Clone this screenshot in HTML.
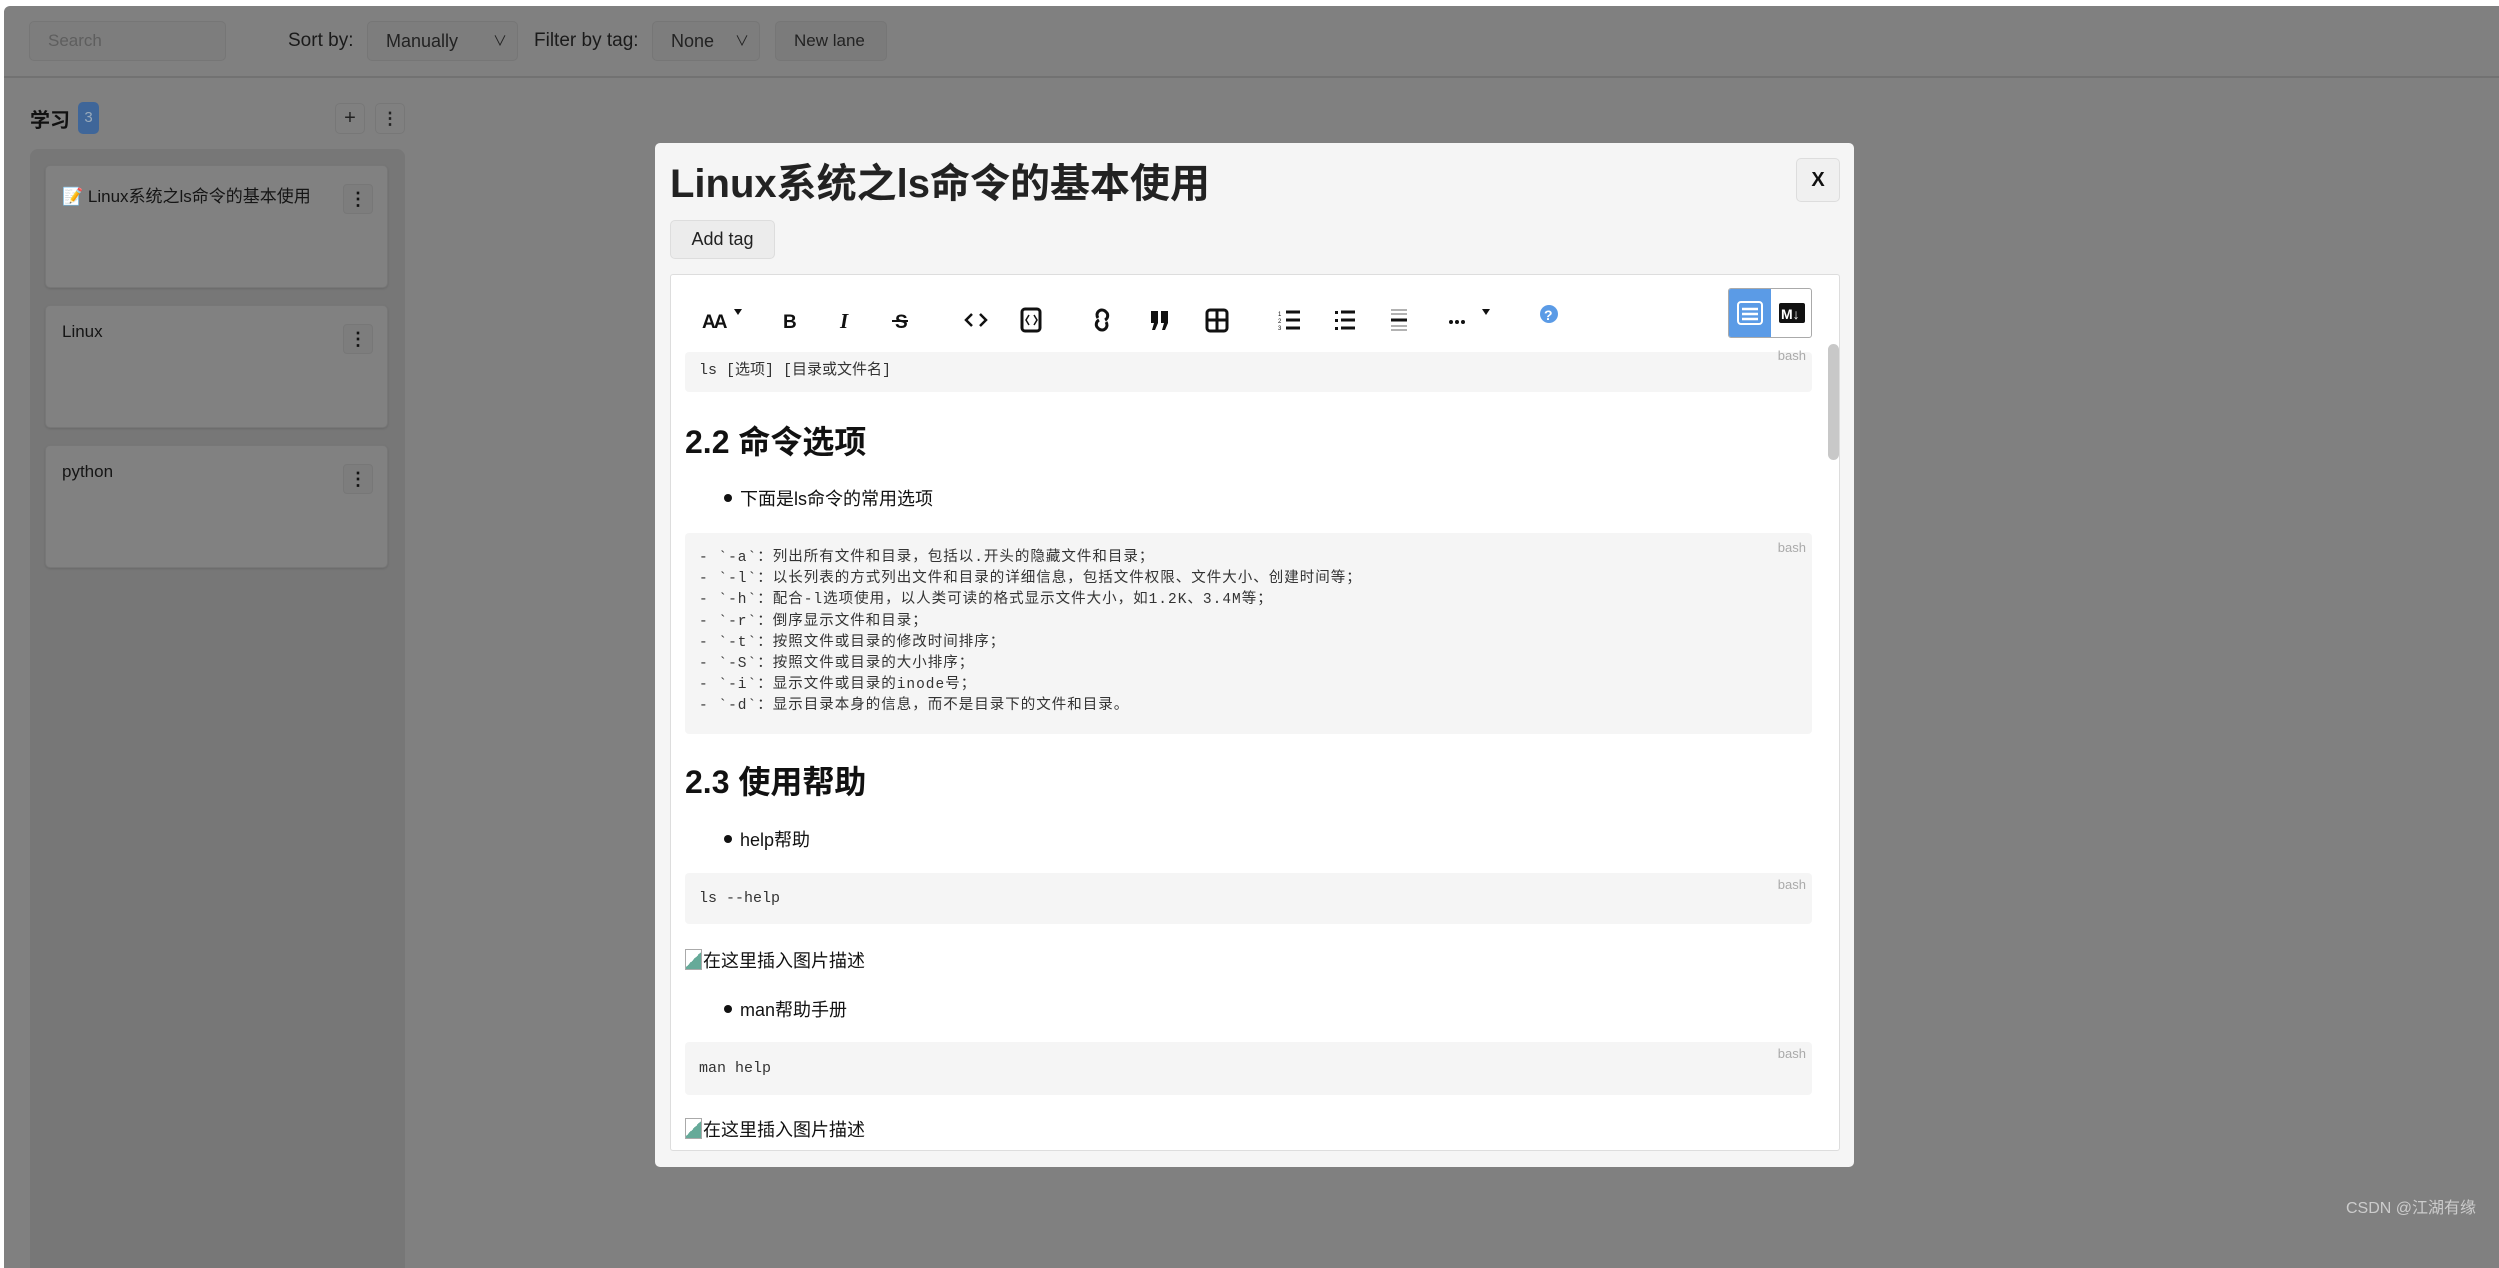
<!DOCTYPE html>
<html><head><meta charset="utf-8">
<style>
*{box-sizing:border-box;margin:0;padding:0}
html,body{overflow:hidden}
body{width:2499px;height:1268px;background:#fff;font-family:"Liberation Sans","Noto Sans CJK SC",sans-serif;position:relative}
.abs{position:absolute}
#bg{left:4px;top:6px;width:2495px;height:1262px;background:#808080;border-top-left-radius:6px}
.ctl{position:absolute;top:21px;height:40px;border:1px solid #767676;border-radius:5px;background:#7d7d7d;color:#222;font-size:18px;line-height:38px;padding-left:18px}
.lbl{position:absolute;top:21px;line-height:40px;font-size:19px;color:#1a1a1a}
.card{position:absolute;left:45px;width:343px;height:123px;background:#818181;border:1px solid #777;border-radius:5px;box-shadow:0 1px 2px rgba(0,0,0,.12)}
.card span{position:absolute;left:16px;top:16px;font-size:17px;color:#151515}
.kb{position:absolute;right:14px;top:18px;width:30px;height:30px;border:1px solid #777;border-radius:4px;background:#7d7d7d;text-align:center;line-height:28px;font-size:18px;color:#111;font-weight:bold}
#modal{left:655px;top:143px;width:1199px;height:1024px;background:#f5f5f5;border-radius:5px}
#ed{left:670px;top:274px;width:1170px;height:877px;background:#fff;border:1px solid #ddd;border-radius:3px;overflow:hidden}
.code{position:absolute;left:14px;width:1127px;background:#f5f5f5;border-radius:4px;font-family:"Liberation Mono","Noto Sans CJK SC",monospace;color:#333}
.bash{position:absolute;right:6px;top:4px;font-size:13px;color:#aaa;font-family:"Liberation Sans",sans-serif}
h2{position:absolute;left:14px;font-size:32px;font-weight:bold;color:#111}
.li{position:absolute;left:69px;font-size:18px;color:#111}
.li:before{content:"";position:absolute;left:-16px;top:9px;width:8px;height:8px;border-radius:50%;background:#111}
.img{position:absolute;left:14px;font-size:18px;color:#111;padding-left:18px}
.img:before{content:"";position:absolute;left:0;top:2px;width:15px;height:19px;border:1px solid #aaa;background:linear-gradient(135deg,#fff 50%,#6a9 50%)}
</style></head><body>
<div id="bg" class="abs"></div>
<div class="abs" style="left:4px;top:76px;width:2495px;height:2px;background:#727272"></div>
<div class="ctl" style="left:29px;width:197px;color:#5e5e5e;font-size:17px">Search</div>
<div class="lbl" style="left:288px">Sort by:</div>
<div class="ctl" style="left:367px;width:151px">Manually<span style="position:absolute;right:10px;font-size:14px">&#x2228;</span></div>
<div class="lbl" style="left:534px">Filter by tag:</div>
<div class="ctl" style="left:652px;width:108px">None<span style="position:absolute;right:10px;font-size:14px">&#x2228;</span></div>
<div class="ctl" style="left:775px;width:112px;background:#7b7b7b;font-size:17px">New lane</div>

<div class="abs" style="left:30px;top:104px;font-size:20px;font-weight:bold;color:#111">学习</div>
<div class="abs" style="left:78px;top:102px;width:21px;height:32px;background:#3f6699;border-radius:5px;color:#9ab;font-size:15px;text-align:center;line-height:32px">3</div>
<div class="abs" style="left:335px;top:103px;width:30px;height:31px;border:1px solid #777;border-radius:5px;text-align:center;line-height:29px;font-size:20px;color:#222">+</div>
<div class="abs" style="left:375px;top:103px;width:30px;height:31px;border:1px solid #777;border-radius:5px;text-align:center;line-height:29px;font-size:17px;font-weight:bold;color:#222">⋮</div>
<div class="abs" style="left:30px;top:149px;width:375px;height:1119px;background:#777;border-radius:8px 8px 0 0"></div>
<div class="card" style="top:165px"><span>📝 Linux系统之ls命令的基本使用</span><div class="kb">⋮</div></div>
<div class="card" style="top:305px"><span>Linux</span><div class="kb">⋮</div></div>
<div class="card" style="top:445px"><span>python</span><div class="kb">⋮</div></div>

<div id="modal" class="abs">
 <div class="abs" style="left:15px;top:8px;font-size:40px;font-weight:bold;color:#222">Linux系统之ls命令的基本使用</div>
 <div class="abs" style="left:1141px;top:15px;width:44px;height:44px;border:1px solid #ddd;border-radius:5px;background:#f0f0f0;text-align:center;line-height:42px;font-size:20px;font-weight:bold;color:#111">X</div>
 <div class="abs" style="left:15px;top:77px;width:105px;height:39px;border:1px solid #ddd;border-radius:5px;background:#ececec;text-align:center;line-height:37px;font-size:18px;color:#222">Add tag</div>
</div>

<div id="ed" class="abs">
 <div class="code" style="top:77px;height:40px;font-size:15px;padding:6px 0 0 14px">ls [选项] [目录或文件名]<div class="bash" style="top:-4px">bash</div></div>
 <h2 style="top:142px">2.2 命令选项</h2>
 <div class="li" style="top:210px">下面是ls命令的常用选项</div>
 <div class="code" style="top:258px;height:201px;font-size:14.5px;line-height:21.2px;padding:15px 0 0 14px;letter-spacing:1px">
 - `-a`：列出所有文件和目录，包括以.开头的隐藏文件和目录；<br>
 - `-l`：以长列表的方式列出文件和目录的详细信息，包括文件权限、文件大小、创建时间等；<br>
 - `-h`：配合-l选项使用，以人类可读的格式显示文件大小，如1.2K、3.4M等；<br>
 - `-r`：倒序显示文件和目录；<br>
 - `-t`：按照文件或目录的修改时间排序；<br>
 - `-S`：按照文件或目录的大小排序；<br>
 - `-i`：显示文件或目录的inode号；<br>
 - `-d`：显示目录本身的信息，而不是目录下的文件和目录。
 <div class="bash" style="letter-spacing:0">bash</div></div>
 <h2 style="top:482px">2.3 使用帮助</h2>
 <div class="li" style="top:551px">help帮助</div>
 <div class="code" style="top:598px;height:51px;font-size:15px;padding:17px 0 0 14px">ls --help<div class="bash">bash</div></div>
 <div class="img" style="top:672px">在这里插入图片描述</div>
 <div class="li" style="top:721px">man帮助手册</div>
 <div class="code" style="top:767px;height:53px;font-size:15px;padding:18px 0 0 14px">man help<div class="bash">bash</div></div>
 <div class="img" style="top:841px">在这里插入图片描述</div>
 <div class="abs" style="left:1157px;top:69px;width:11px;height:116px;background:#c8c8c8;border-radius:6px"></div>
</div>
<svg class="abs" style="left:690px;top:300px" width="880" height="40" viewBox="0 0 880 40" fill="#111">
 <text x="12" y="28" font-family="Liberation Sans" font-weight="bold" font-size="19" letter-spacing="-2">AA</text>
 <path d="M44 9h8l-4 6z"/>
 <text x="93" y="28" font-family="Liberation Sans" font-weight="bold" font-size="19">B</text>
 <text x="150" y="28" font-family="Liberation Serif" font-style="italic" font-weight="bold" font-size="21">I</text>
 <text x="205" y="28" font-family="Liberation Sans" font-weight="bold" font-size="19">S</text><rect x="202" y="20" width="16" height="2"/>
 <path d="M282 14l-6 6 6 6M290 14l6 6-6 6" fill="none" stroke="#111" stroke-width="2.5"/>
 <rect x="332" y="9" width="18" height="22" rx="3" fill="none" stroke="#111" stroke-width="3"/><path d="M339 15l-3 5 3 5M344 15l3 5-3 5" fill="none" stroke="#111" stroke-width="1.5"/>
 <path d="M408 18a5 5 0 0 1 7-7l2 2a5 5 0 0 1-2 7M416 22a5 5 0 0 1-7 7l-2-2a5 5 0 0 1 2-7" fill="none" stroke="#111" stroke-width="3"/>
 <path d="M461 11h7v12l-3 7h-3l2-7h-3zM471 11h7v12l-3 7h-3l2-7h-3z"/>
 <rect x="517" y="10" width="20" height="21" rx="3" fill="none" stroke="#111" stroke-width="3"/><path d="M527 10v21M517 20h20" stroke="#111" stroke-width="3"/>
 <path d="M596 12h14M596 20h14M596 28h14" stroke="#111" stroke-width="3"/><text x="588" y="16" font-size="6">1</text><text x="588" y="23" font-size="6">2</text><text x="588" y="30" font-size="6">3</text>
 <path d="M651 12h14M651 20h14M651 28h14" stroke="#111" stroke-width="3"/><rect x="645" y="11" width="3" height="3"/><rect x="645" y="19" width="3" height="3"/><rect x="645" y="27" width="3" height="3"/>
 <path d="M701 10h16M701 14h16M701 26h16M701 30h16" stroke="#999" stroke-width="1.5"/><path d="M701 20h16" stroke="#111" stroke-width="3"/>
 <circle cx="761" cy="22" r="2"/><circle cx="767" cy="22" r="2"/><circle cx="773" cy="22" r="2"/><path d="M792 9h8l-4 6z"/>
 <circle cx="859" cy="14" r="9" fill="#5b9be6"/><text x="854" y="20" font-family="Liberation Sans" font-weight="bold" font-size="14" fill="#fff">?</text>
</svg>
<div class="abs" style="left:1728px;top:288px;width:84px;height:50px;border:1px solid #aaa;border-radius:3px;background:#fff;overflow:hidden">
 <div class="abs" style="left:0;top:0;width:42px;height:50px;background:#5b9be6"></div>
 <svg class="abs" style="left:8px;top:12px" width="26" height="24"><rect x="1" y="1" width="24" height="22" rx="3" fill="none" stroke="#fff" stroke-width="2"/><path d="M5 8h16M5 13h16M5 18h16" stroke="#fff" stroke-width="2.5"/></svg>
 <svg class="abs" style="left:50px;top:14px" width="26" height="20"><rect width="26" height="20" rx="2" fill="#111"/><text x="2" y="16" font-family="Liberation Sans" font-weight="bold" font-size="14" fill="#fff">M↓</text></svg>
</div>
<div class="abs" style="left:2346px;top:1194px;font-size:16px;color:#ccc">CSDN @江湖有缘</div>
</body></html>
